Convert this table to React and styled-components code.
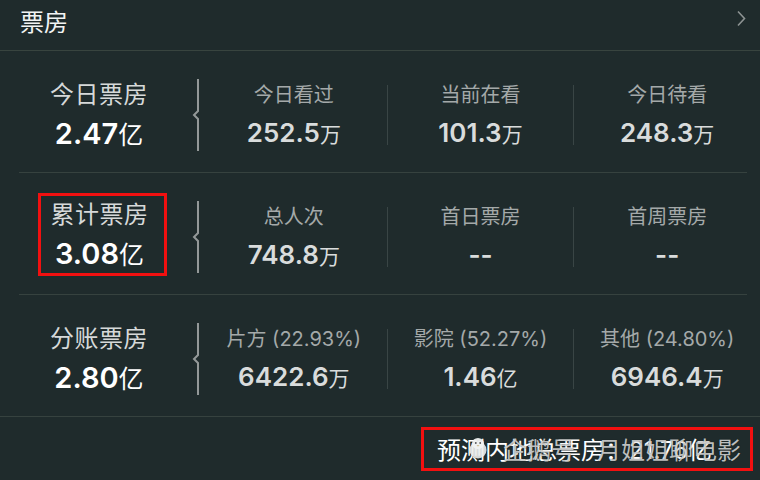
import React from 'react';
import styled, { createGlobalStyle } from 'styled-components';

const Global = createGlobalStyle`
  html, body { margin: 0; padding: 0; background: #1f2b2c; }
  body {
    width: 760px; height: 480px; overflow: hidden;
    font-family: Inter, "Noto Sans CJK SC", sans-serif;
  }
`;

const Page = styled.div`
  width: 760px;
  height: 480px;
  background: #1f2b2c;
  display: flex;
  flex-direction: column;
`;

const Header = styled.div`
  height: 51px;
  box-sizing: border-box;
  border-bottom: 1px solid #38443f;
  display: flex;
  align-items: flex-start;
  justify-content: space-between;
  padding: 6px 14px 0 20px;
`;

const Title = styled.div`
  font-family: "Noto Sans CJK SC", sans-serif;
  font-size: 24px;
  line-height: 30px;
  color: #f2f4f4;
`;

const Chevron = styled.svg`
  margin-top: 4px;
  display: block;
`;

const Section = styled.div`
  height: 121px;
  box-sizing: border-box;
  padding-top: 6px;
  display: flex;
  align-items: center;
`;

const Divider = styled.div`
  height: 1px;
  background: #36423f;
  margin: ${p => (p.$full ? '0' : '0 13px 0 19px')};
`;

const LeftCol = styled.div`
  flex: 0 0 192px;
  box-sizing: border-box;
  padding-left: 6px;
  display: flex;
  justify-content: center;
`;

const LeftInner = styled.div`
  display: flex;
  flex-direction: column;
  align-items: center;
  ${p =>
    p.$marked &&
    `
    border: 3px solid #f21010;
    padding: 5px 15px 5px 10px;
    margin: 0 0 4px 6px;
  `}
`;

const MainLabel = styled.div`
  font-family: "Noto Sans CJK SC", sans-serif;
  font-size: 24px;
  line-height: 24px;
  color: #d6d9d9;
  letter-spacing: 0.5px;
`;

const MainValue = styled.div`
  margin-top: 14px;
  font-size: 29px;
  line-height: 28px;
  font-weight: 600;
  color: #ffffff;
  white-space: nowrap;
`;

const Unit = styled.span`
  font-family: "Noto Sans CJK SC", sans-serif;
  font-weight: 400;
  font-size: ${p => p.$size || 24}px;
`;

const Brace = styled.svg`
  flex: 0 0 8px;
  display: block;
`;

const Grid = styled.div`
  flex: 1;
  display: grid;
  grid-template-columns: repeat(3, 1fr);
`;

const Cell = styled.div`
  height: 60px;
  display: flex;
  flex-direction: column;
  align-items: center;
  border-left: 1px solid ${p => (p.$first ? 'transparent' : '#394545')};
`;

const SubLabel = styled.div`
  font-size: 20px;
  line-height: 20px;
  color: #a4a9a9;
  white-space: nowrap;
`;

const SubValue = styled.div`
  margin-top: 16px;
  font-size: 26px;
  line-height: 24px;
  font-weight: 600;
  color: #d9dcdc;
  white-space: nowrap;
`;

const Footer = styled.div`
  flex: 1;
  position: relative;
  display: flex;
  align-items: center;
  justify-content: flex-end;
  padding-right: 7px;
`;

const PredictBox = styled.div`
  width: 332px;
  height: 44px;
  box-sizing: border-box;
  border: 3px solid #f21010;
  padding-left: 13px;
  display: flex;
  align-items: center;
  font-size: 24px;
  color: #ffffff;
  white-space: nowrap;
`;

const Watermark = styled.div`
  position: absolute;
  left: 468px;
  top: 14px;
  height: 34px;
  display: flex;
  align-items: center;
  font-family: "Noto Sans CJK SC", sans-serif;
  font-size: 24px;
  color: rgba(228, 230, 230, 0.82);
  text-shadow: 0 0 1px rgba(0, 0, 0, 0.6);
  white-space: nowrap;
  pointer-events: none;
`;

const WmPart = styled.span`
  margin-left: ${p => p.$gap}px;
`;

const BraceIcon = () => (
  <Brace width="8" height="72" viewBox="0 0 8 72">
    <path
      d="M6 0 V32 L2 36 L6 40 V72"
      fill="none"
      stroke="#939898"
      strokeWidth="2"
    />
  </Brace>
);

const Penguin = () => (
  <svg width="20" height="22" viewBox="0 0 20 22">
    <ellipse cx="10" cy="13" rx="8.5" ry="8.5" fill="rgba(235,237,237,0.9)" />
    <ellipse cx="10" cy="6.5" rx="6" ry="5.5" fill="rgba(240,242,242,0.95)" />
    <circle cx="7.8" cy="6" r="0.9" fill="#555" />
    <circle cx="12.2" cy="6" r="0.9" fill="#555" />
    <path d="M8.5 8.3 L11.5 8.3 L10 9.6 Z" fill="#c9b27a" />
  </svg>
);

const sections = [
  {
    label: '今日票房',
    value: '2.47',
    subs: [
      { label: '今日看过', value: '252.5', unit: '万' },
      { label: '当前在看', value: '101.3', unit: '万' },
      { label: '今日待看', value: '248.3', unit: '万' },
    ],
  },
  {
    label: '累计票房',
    value: '3.08',
    marked: true,
    subs: [
      { label: '总人次', value: '748.8', unit: '万' },
      { label: '首日票房', value: '--' },
      { label: '首周票房', value: '--' },
    ],
  },
  {
    label: '分账票房',
    value: '2.80',
    full: true,
    subs: [
      { label: '片方 (22.93%)', value: '6422.6', unit: '万' },
      { label: '影院 (52.27%)', value: '1.46', unit: '亿' },
      { label: '其他 (24.80%)', value: '6946.4', unit: '万' },
    ],
  },
];

export default function App() {
  return (
    <Page>
      <Global />
      <Header>
        <Title>票房</Title>
        <Chevron width="10" height="17" viewBox="0 0 10 17">
          <path d="M2 1.5 L8.5 8.5 L2 15.5" fill="none" stroke="#8c9292" strokeWidth="1.6" />
        </Chevron>
      </Header>
      {sections.map(s => (
        <React.Fragment key={s.label}>
          <Section>
            <LeftCol>
              <LeftInner $marked={s.marked}>
                <MainLabel>{s.label}</MainLabel>
                <MainValue>
                  {s.value}
                  <Unit $size={25}>亿</Unit>
                </MainValue>
              </LeftInner>
            </LeftCol>
            <BraceIcon />
            <Grid>
              {s.subs.map((c, i) => (
                <Cell key={c.label} $first={i === 0}>
                  <SubLabel>{c.label}</SubLabel>
                  <SubValue>
                    {c.value}
                    {c.unit && <Unit $size={21}>{c.unit}</Unit>}
                  </SubValue>
                </Cell>
              ))}
            </Grid>
          </Section>
          <Divider $full={s.full} />
        </React.Fragment>
      ))}
      <Footer>
        <PredictBox>预测内地总票房：21.76亿</PredictBox>
        <Watermark>
          <Penguin />
          <WmPart $gap={15}>企鹅号</WmPart>
          <WmPart $gap={22}>月姐姐聊电影</WmPart>
        </Watermark>
      </Footer>
    </Page>
  );
}
